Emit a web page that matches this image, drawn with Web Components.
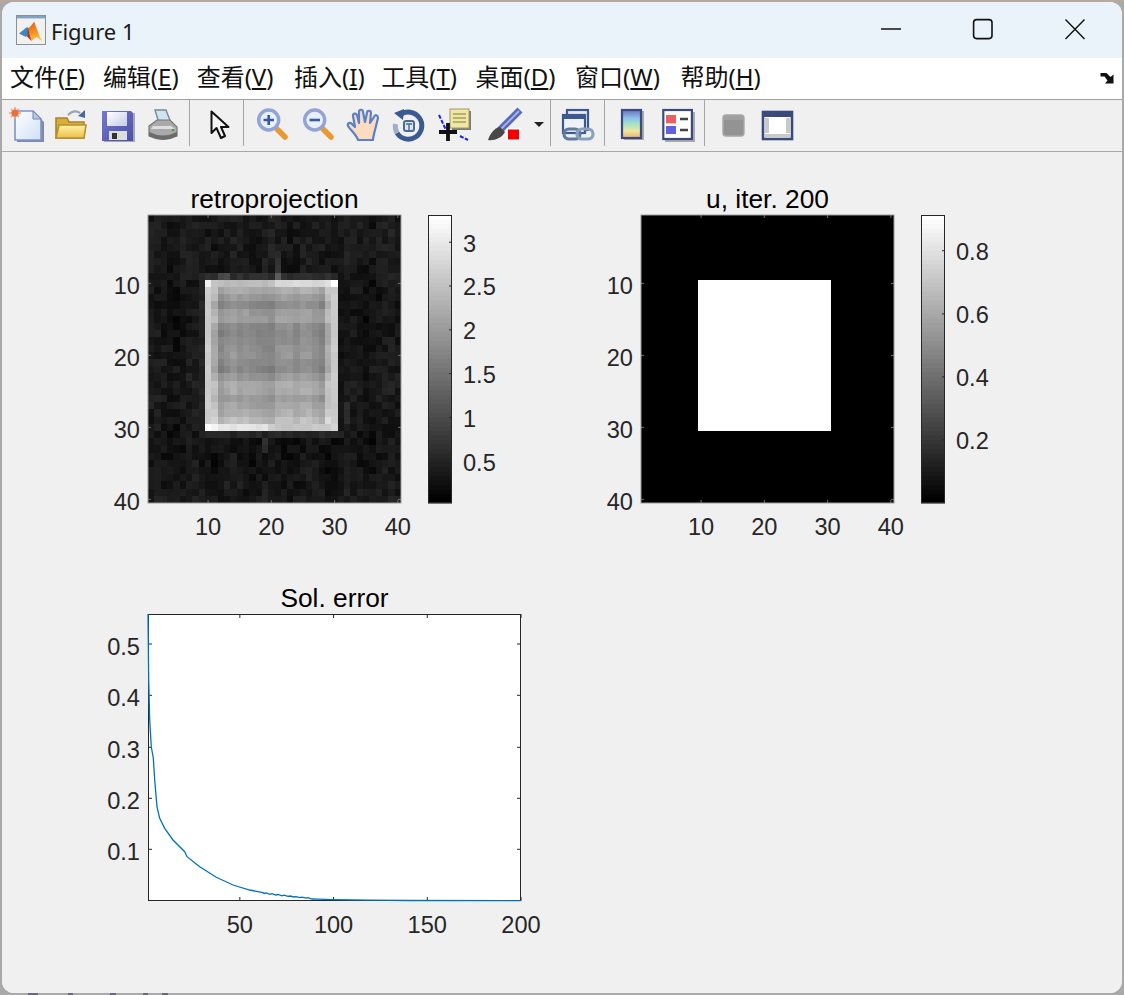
<!DOCTYPE html>
<html>
<head>
<meta charset="utf-8">
<title>Figure 1</title>
<style>
  html, body { margin: 0; height: 100%; }
  body {
    width: 1124px;
    height: 995px;
    overflow: hidden;
    box-sizing: border-box;
    padding: 2px;
    background:
      linear-gradient(#6a6a70, #6a6a70) 28px 993px / 10px 2px no-repeat,
      linear-gradient(#6a6a70, #6a6a70) 68px 993px / 5px 2px no-repeat,
      linear-gradient(#6a6a70, #6a6a70) 110px 993px / 6px 2px no-repeat,
      linear-gradient(#6a6a70, #6a6a70) 143px 993px / 5px 2px no-repeat,
      linear-gradient(#6a6a70, #6a6a70) 162px 993px / 6px 2px no-repeat,
      linear-gradient(#b9a89f 0 2px, #a9a9a9 2px);
  }
</style>
</head>
<body>

<figure-window>
  <title-bar slot="title" label="Figure 1"></title-bar>

  <menu-bar slot="menu">
    <menu-item>文件(<u>F</u>)</menu-item>
    <menu-item>编辑(<u>E</u>)</menu-item>
    <menu-item style="margin-right:2.6px">查看(<u>V</u>)</menu-item>
    <menu-item style="margin-right:-1.4px">插入(<u>I</u>)</menu-item>
    <menu-item style="margin-right:.6px">工具(<u>T</u>)</menu-item>
    <menu-item style="margin-right:1.6px">桌面(<u>D</u>)</menu-item>
    <menu-item style="margin-right:2.6px">窗口(<u>W</u>)</menu-item>
    <menu-item>帮助(<u>H</u>)</menu-item>
  </menu-bar>

  <fig-toolbar slot="tools">
    <tool-button icon="new"></tool-button>
    <tool-button icon="open"></tool-button>
    <tool-button icon="save"></tool-button>
    <tool-button icon="print"></tool-button>
    <tool-sep style="margin:0 7px 0 3px"></tool-sep>
    <tool-button icon="arrow"></tool-button>
    <tool-sep style="margin:0 3px 0 0"></tool-sep>
    <tool-button icon="zoomin"></tool-button>
    <tool-button icon="zoomout" style="margin-left:1px"></tool-button>
    <tool-button icon="hand"></tool-button>
    <tool-button icon="rotate"></tool-button>
    <tool-button icon="cursor" style="margin-left:1px"></tool-button>
    <tool-button icon="brush" style="margin-left:3px"></tool-button>
    <tool-button icon="caret" style="width:10px;margin:0 6px"></tool-button>
    <tool-sep style="margin:0 3px 0 0"></tool-sep>
    <tool-button icon="link"></tool-button>
    <tool-sep style="margin:0 4px 0 4px"></tool-sep>
    <tool-button icon="colorbar"></tool-button>
    <tool-button icon="legend" style="margin-left:-1px"></tool-button>
    <tool-sep style="margin:0 5px 0 4px"></tool-sep>
    <tool-button icon="gray"></tool-button>
    <tool-button icon="plot" style="margin-left:-1px"></tool-button>
  </fig-toolbar>

  <fig-canvas slot="canvas">
    <image-axes left="146" top="63" width="253" height="288" label="retroprojection" data="retro"></image-axes>
    <color-bar left="426" top="63" width="24" height="288" ticks="3:241.7,2.5:285.5,2:329.3,1.5:373.1,1:416.9,0.5:460.7"></color-bar>
    <image-axes left="639" top="63" width="253" height="288" label="u, iter. 200" data="binary"></image-axes>
    <color-bar left="919" top="63" width="24" height="288" ticks="0.8:250.2,0.6:313.4,0.4:376.4,0.2:439.3"></color-bar>
    <line-axes left="146" top="462" width="373" height="287" label="Sol. error"></line-axes>
  </fig-canvas>
</figure-window>

<script>
const FONT_PLOT = '"Liberation Sans", Arial, sans-serif';

/* ---------- window shell ---------- */
class FigureWindow extends HTMLElement {
    constructor() {
        super();
        this.attachShadow({ mode: 'open' });
        this.shadowRoot.innerHTML = `
            <style>
                :host {
                    display: flex;
                    flex-direction: column;
                    height: 991px;
                    width: 1120px;
                    background: #f0f0f0;
                    border-radius: 12px;
                    overflow: hidden;
                }
            </style>
            <slot name="title"></slot>
            <slot name="menu"></slot>
            <slot name="tools"></slot>
            <slot name="canvas"></slot>
        `;
    }
}

class TitleBar extends HTMLElement {
    connectedCallback() {
        this.attachShadow({ mode: 'open' });
        this.shadowRoot.innerHTML = `
            <style>
                :host {
                    display: flex;
                    align-items: center;
                    height: 56px;
                    background: #e9f3f9;
                    color: #1a1a1a;
                    font: 22px "Noto Sans", "Open Sans", sans-serif;
                    padding-left: 14px;
                    padding-right: 1px;
                }
                .logo { width: 30px; height: 30px; flex: none; }
                .text { margin-left: 5px; flex: 1; position: relative; top: 1px; }
                .ctl { width: 92px; height: 56px; flex: none; display: block; }
            </style>
            <svg class="logo" viewBox="0 0 30 30">
                <defs>
                    <linearGradient id="peak" x1="0" y1="0" x2="0.3" y2="1">
                        <stop offset="0" stop-color="#e8561c"/>
                        <stop offset="0.55" stop-color="#f08a20"/>
                        <stop offset="1" stop-color="#f6c040"/>
                    </linearGradient>
                </defs>
                <rect x="0.5" y="0.5" width="29" height="29" fill="#f1f1f1" stroke="#8f8f8f"/>
                <rect x="1" y="1" width="28" height="2.4" fill="#7fa3c4"/>
                <path d="M3,18.5 L11,12 L15,16 L10,22 Z" fill="#3d86c6"/>
                <path d="M18.2,6.5 C20,12 23,20 26,26 L20.5,22 L15.5,26 C14.5,20 13,17 12,13 C14.5,12 16.5,9 18.2,6.5 Z" fill="url(#peak)"/>
                <path d="M12,13 L15.5,26 L11,21.5 Z" fill="#b5381a"/>
            </svg>
            <span class="text">${this.getAttribute('label')}</span>
            <svg class="ctl" viewBox="0 0 92 56"><path d="M36 27H56" stroke="#111" stroke-width="1.6"/></svg>
            <svg class="ctl" viewBox="0 0 92 56"><rect x="36.6" y="17.6" width="18.4" height="19" rx="3" fill="none" stroke="#111" stroke-width="1.6"/></svg>
            <svg class="ctl" viewBox="0 0 92 56"><path d="M36.5 17.5L55.5 37M55.5 17.5L36.5 37" stroke="#111" stroke-width="1.4" fill="none"/></svg>
        `;
    }
}

/* ---------- menu ---------- */
class MenuBar extends HTMLElement {
    connectedCallback() {
        this.attachShadow({ mode: 'open' });
        this.shadowRoot.innerHTML = `
            <style>
                :host {
                    display: flex;
                    align-items: center;
                    gap: 18px;
                    box-sizing: border-box;
                    height: 42px;
                    padding: 0 8px 4px 8px;
                    background: #fff;
                    border-bottom: 1px solid #a0a0a0;
                    position: relative;
                }
                .more { position: absolute; right: 6px; top: 14px; width: 16px; height: 12px; filter: blur(.3px); }
            </style>
            <slot></slot>
            <svg class="more" viewBox="0 0 16 12">
                <path d="M0.5 1H6.5L10.5 5 13.5 2.5V11.5H5L7.5 8.5 4.5 4.5H0.5Z" fill="#111"/>
            </svg>
        `;
    }
}

class MenuItem extends HTMLElement {
    connectedCallback() {
        this.attachShadow({ mode: 'open' });
        this.shadowRoot.innerHTML = `
            <style>
                :host {
                    display: block;
                    font: 24px/30px "Noto Sans", "Noto Sans CJK SC", sans-serif;
                    color: #111;
                    white-space: nowrap;
                }
            </style>
            <slot></slot>
        `;
    }
}

/* ---------- toolbar ---------- */
const ICONS = {
    new: `<path d="M15 14H34L42 22V42H15Z" fill="#7f87ad"/>
          <path d="M13 11H31L39 19V40H13Z" fill="url(#pg)" stroke="#7f94c4" stroke-width="1.6"/>
          <path d="M31 11V19H39Z" fill="#b8c6e2" stroke="#6f86b8" stroke-width="1"/>
          <path d="M13 7V19M7 13H19M9 9L17 17M17 9L9 17" stroke="#f2a27c" stroke-width="1.6"/>
          <circle cx="13" cy="13" r="3.6" fill="#ea6f3e"/>`,
    open: `<path d="M8 18V38H36V22H21L19 18Z" fill="#d9ac3e" stroke="#a9842c" stroke-width="1.6"/>
           <path d="M8 38L11 25H38L36 38Z" fill="url(#fold)" stroke="#b8902c" stroke-width="1.6"/>
           <path d="M20 15Q26 9 32 13" stroke="#97a4b3" stroke-width="2.2" fill="none"/>
           <path d="M30 16L37 10V18Z" fill="#46699c"/>`,
    save: `<path d="M10 39H40V42H10ZM38 13H41V42H38Z" fill="#a2a5bd"/>
           <path d="M8 11H37L39 13V41H8Z" fill="url(#disk)"/>
           <rect x="13" y="12" width="20" height="14" fill="url(#lab)"/>
           <rect x="15" y="31" width="18" height="9" fill="#dcdcdc"/>
           <rect x="18" y="33" width="5" height="6" fill="#333"/>`,
    print: `<path d="M15 10H26L31 23H19Z" fill="#cfe4f2" stroke="#7d8890" stroke-width="1.4"/>
            <path d="M9 26L17 20H30L37 27V36Q23 43 9 36Z" fill="#a9a9a9" stroke="#777" stroke-width="1.2"/>
            <path d="M13 26H31L35 29H11Z" fill="#dedede"/>
            <path d="M9 32Q23 39 37 32V36Q23 43 9 36Z" fill="#6b6b6b"/>
            <circle cx="33" cy="30" r="1.3" fill="#3f9d55"/>`,
    arrow: `<path d="M14.5 11.5V33L19.5 28 24 38 28 36 24 27H31.5Z" fill="#f4f4f4" stroke="#111" stroke-width="2" stroke-linejoin="round"/>`,
    zoomin: `<path d="M30 29L38 37" stroke="#e89a30" stroke-width="5.5" stroke-linecap="round"/>
             <circle cx="21.7" cy="20" r="10" fill="#e8f0fb" stroke="#93a3d4" stroke-width="3.4"/>
             <path d="M16.5 20H27M21.7 15V25" stroke="#3a56a4" stroke-width="2.6"/>`,
    zoomout: `<path d="M29 29L37 37" stroke="#e89a30" stroke-width="5.5" stroke-linecap="round"/>
              <circle cx="20.7" cy="20" r="10" fill="#e8f0fb" stroke="#93a3d4" stroke-width="3.4"/>
              <path d="M15.5 20H26" stroke="#3a56a4" stroke-width="2.6"/>`,
    hand: `<path d="M18 40C16 34 11 31 8 26C7 23 10 22 12 24L15 27L13 16C13 13 16 13 17 15L19 23L19 12C19 9 23 9 23 12L25 22L27 13C27 10 31 10 31 13L30 23L34 17C35 14 38 15 38 18L35 30C34 34 33 37 33 40Z"
                 fill="#fbdcc0" stroke="#5a80c8" stroke-width="2.2" stroke-linejoin="round"/>`,
    rotate: `<path d="M14 15A13.5 13.5 0 1 1 11 33" fill="none" stroke="#3a5a90" stroke-width="5"/>
             <path d="M11 33A13.5 13.5 0 0 1 9.5 24" fill="none" stroke="#9fb0c6" stroke-width="5"/>
             <path d="M8 13L18 9L17 20Z" fill="#3a5a90"/>
             <rect x="18" y="21" width="10" height="10" rx="2" fill="#dfe6f0" stroke="#4a6a9a" stroke-width="2"/>
             <path d="M20 24H26M23 24V31" stroke="#4a6a9a" stroke-width="1.4"/>`,
    cursor: `<path d="M6 15L13 30M27 36L35 40" stroke="#2020e0" stroke-width="2" stroke-dasharray="4 1.5" fill="none"/>
             <rect x="19" y="11" width="19" height="19" fill="#7b7b75"/>
             <rect x="17" y="9" width="19" height="19" fill="#efe7a3" stroke="#9c9a70" stroke-width="1"/>
             <path d="M20 14H33M20 18H33M20 22H33" stroke="#b7b06e" stroke-width="1.8"/>
             <path d="M6 32H24M15 23V41" stroke="#111" stroke-width="3.8"/>`,
    brush: `<path d="M38 10L18 30" stroke="#5a68bc" stroke-width="7"/>
            <path d="M37 11L19 29" stroke="#aab4e6" stroke-width="1.8"/>
            <path d="M18 27C12 28 8 34 6 40C12 41 20 38 23 32Z" fill="#484848"/>
            <rect x="24.5" y="28" width="14" height="13" fill="#fff"/>
            <rect x="26" y="29.5" width="11" height="10" fill="#f50000"/>`,
    caret: `<path d="M0 22H10L5 27Z" fill="#222"/>`,
    link: `<rect x="13" y="10" width="21" height="20" fill="#e6ebf3" stroke="#3d5a90" stroke-width="2.2"/>
           <rect x="9" y="15" width="22" height="18" fill="#eef1f6" stroke="#3d5a90" stroke-width="2.2"/>
           <rect x="9" y="15" width="22" height="4" fill="#3d5a90"/>
           <rect x="10" y="29" width="16" height="10" rx="5" fill="none" stroke="#5f7ba2" stroke-width="3.2"/>
           <rect x="23" y="29" width="16" height="10" rx="5" fill="none" stroke="#8aa0bc" stroke-width="3.2"/>`,
    colorbar: `<rect x="15" y="11" width="20" height="29" fill="#aaa"/>
               <rect x="13" y="10" width="19" height="28" fill="url(#cb)" stroke="#3a4a80" stroke-width="2.2"/>`,
    legend: `<rect x="11" y="12" width="30" height="30" fill="#aaa"/>
             <rect x="9.3" y="10" width="28.6" height="29" fill="#fff" stroke="#3a4a80" stroke-width="2.2"/>
             <rect x="12" y="15" width="10" height="8.4" fill="#e86060"/>
             <rect x="12" y="26" width="10" height="8" fill="#6060e0"/>
             <path d="M26 19H34M26 30H34" stroke="#444" stroke-width="2.4"/>`,
    gray: `<rect x="13" y="15" width="21" height="21" rx="3" fill="#939393" stroke="#a8a8a8" stroke-width="1.4"/>
           <rect x="14" y="16" width="19" height="4" fill="#a0a0a0"/>`,
    plot: `<rect x="8" y="12" width="29" height="27" fill="#fff" stroke="#3a4a7a" stroke-width="2.6"/>
           <rect x="8" y="12" width="29" height="5" fill="#3a4a7a"/>
           <rect x="10" y="18" width="4" height="15" fill="#c9c9c9"/>
           <rect x="31" y="18" width="4" height="15" fill="#c9c9c9"/>
           <rect x="10" y="34" width="25" height="4" fill="#c9c9c9"/>`
};

class FigToolbar extends HTMLElement {
    connectedCallback() {
        this.attachShadow({ mode: 'open' });
        this.shadowRoot.innerHTML = `
            <style>
                :host {
                    display: flex;
                    box-sizing: border-box;
                    height: 52px;
                    background: #f0f0f0;
                    border-bottom: 1px solid #a9a9a9;
                }
            </style>
            <slot></slot>
        `;
    }
}

class ToolSep extends HTMLElement {
    connectedCallback() {
        this.attachShadow({ mode: 'open' });
        this.shadowRoot.innerHTML = `
            <style>
                :host {
                    display: block;
                    flex: none;
                    width: 1px;
                    height: 46px;
                    margin-top: 3px;
                    background: #a5a5a5;
                }
            </style>
        `;
    }
}

class ToolButton extends HTMLElement {
    connectedCallback() {
        this.attachShadow({ mode: 'open' });
        const name = this.getAttribute('icon');
        const vbW = name === 'caret' ? 10 : 46;
        this.shadowRoot.innerHTML = `
            <style>
                :host { display: block; flex: none; width: 46px; height: 51px; }
                svg { display: block; width: 100%; height: 51px; filter: blur(.6px); overflow: visible; }
            </style>
            <svg viewBox="0 0 ${vbW} 51">
                <defs>
                    <linearGradient id="pg" x1="0" y1="0" x2="1" y2="1">
                        <stop offset="0" stop-color="#fff"/><stop offset="1" stop-color="#cfe0f6"/>
                    </linearGradient>
                    <linearGradient id="fold" x1="0" y1="0" x2="0" y2="1">
                        <stop offset="0" stop-color="#fff3a6"/><stop offset="1" stop-color="#ecc04a"/>
                    </linearGradient>
                    <linearGradient id="disk" x1="0" y1="0" x2="1" y2="1">
                        <stop offset="0" stop-color="#7378d0"/><stop offset="1" stop-color="#4a50a4"/>
                    </linearGradient>
                    <linearGradient id="lab" x1="0" y1="0" x2="1" y2="1">
                        <stop offset="0" stop-color="#fff"/><stop offset="1" stop-color="#c6cbe8"/>
                    </linearGradient>
                    <linearGradient id="cb" x1="0" y1="0" x2="0" y2="1">
                        <stop offset="0" stop-color="#6a70c0"/><stop offset=".3" stop-color="#8ec4ea"/>
                        <stop offset=".5" stop-color="#a6e2c4"/><stop offset=".75" stop-color="#f0e6a0"/>
                        <stop offset="1" stop-color="#f0b070"/>
                    </linearGradient>
                </defs>
                ${ICONS[name]}
            </svg>
        `;
    }
}

/* ---------- figure canvas: axes sit at their own place on it ---------- */
class FigCanvas extends HTMLElement {
    connectedCallback() {
        this.attachShadow({ mode: 'open' });
        this.shadowRoot.innerHTML = `
            <style>
                :host { display: block; flex: 1; position: relative; background: #f0f0f0; }
            </style>
            <slot></slot>
        `;
    }
}

class PlotBase extends HTMLElement {
    box() {
        return ['left', 'top', 'width', 'height'].map(k => Number(this.getAttribute(k)));
    }

    // anchor: c = centred, r = right edge on x, l = left edge on x
    text(str, x, y, anchor) {
        const tx = { c: '-50%', r: '-100%', l: '0' }[anchor];
        return `<span class="t" style="left:${x}px;top:${y}px;transform:translate(${tx},-50%)">${str}</span>`;
    }

    mount(inner) {
        const [l, t, w, h] = this.box();
        this.attachShadow({ mode: 'open' });
        this.shadowRoot.innerHTML = `
            <style>
                :host {
                    display: block;
                    position: absolute;
                    left: ${l}px;
                    top: ${t}px;
                    width: ${w}px;
                    height: ${h}px;
                }
                svg { position: absolute; left: 0; top: 0; width: ${w}px; height: ${h}px; overflow: visible; display: block; }
                .t {
                    position: absolute;
                    font: 23.6px/1 ${FONT_PLOT};
                    color: #262626;
                    white-space: nowrap;
                }
                .t.title { font-size: 26.3px; color: #000; }
            </style>
            ${inner}
        `;
    }

    title(w) {
        return this.text(this.getAttribute('label'), w / 2, -16, 'c').replace('class="t"', 'class="t title"');
    }
}

/* ---------- retro image: row and column profile plus seeded noise ---------- */
function retroValue(r, c, rand) {
    const rows = { 11: 0xa8, 12: 0x98, 13: 0x88, 14: 0x98, 15: 0x9c, 16: 0x88, 17: 0x84, 18: 0x88, 19: 0x8c, 20: 0x90,
                   21: 0x88, 22: 0x84, 23: 0x94, 24: 0xa4, 25: 0xa4, 26: 0x98, 27: 0xa0, 28: 0xa8, 29: 0xb8 };
    const cols = { 11: 0xb4, 12: 0x90, 13: 0x9a, 14: 0xa0, 15: 0x98, 16: 0x9c, 17: 0x96, 18: 0x94, 19: 0x92, 20: 0x90,
                   21: 0x9c, 22: 0x9e, 23: 0xa0, 24: 0x98, 25: 0xa0, 26: 0xa0, 27: 0x98, 28: 0x90, 29: 0xb8 };
    const inside = r >= 10 && r <= 30 && c >= 10 && c <= 30;
    if (inside) {
        if (r === 10 && c === 10) return 0xf0;
        if (r === 10 && c === 30) return 0xff;
        if (r === 10 && c === 29) return 0xe0;
        if (r === 30 && c === 10) return 0xff;
        if (r === 30 && c === 11) return 0xf4;
        if (r === 30 && c === 30) return 0xd4;
        if (r === 10) return (c > 20 ? 0xd4 : 0xb8) + rand() * 12;
        if (r === 30) return (c < 20 ? 0xdc : 0xc0) + rand() * 12;
        if (c === 10) return 0xc6 + rand() * 10;
        if (c === 30) return 0xc6 + rand() * 8;
        return rows[r] + cols[c] - 0x96 + (rand() - 0.5) * 10;
    }
    if (r === 9 && c >= 10 && c <= 30) return (c === 21 ? 0x50 : c === 12 || c === 13 ? 0x44 : 0x26) + rand() * 14;
    if (c === 9 && r >= 9 && r <= 30) return 0x1c + rand() * 16;
    if (r === 31 && c >= 9 && c <= 31) return 0x1e + rand() * 14;
    if (c === 31 && r >= 10 && r <= 30) return 0x0c + rand() * 14;
    if (c === 32 && r >= 27 && r <= 29) return 0x2a + rand() * 10;
    if (c === 21 && r >= 6 && r <= 8) return 0x28 + rand() * 14;
    if (c === 19 && r >= 32 && r <= 33) return 0x28 + rand() * 10;
    // faint row/column streaks so the background is not plain salt noise
    const streak = 4 * Math.sin(r * 12.9) + 4 * Math.sin(c * 7.3);
    return 0x0b + streak + rand() * 0x16;
}

class ImageAxes extends PlotBase {
    connectedCallback() {
        const [, , w, h] = this.box();
        const retro = this.getAttribute('data') === 'retro';
        let seed = 4711;
        const rand = () => (seed = (seed * 16807) % 2147483647) / 2147483647;
        let cells = '';
        if (retro) {
            for (let r = 1; r <= 40; r++) {
                for (let c = 1; c <= 40; c++) {
                    const v = Math.max(0, Math.min(255, Math.round(retroValue(r, c, rand))));
                    cells += `<rect x="${c - 1}" y="${r - 1}" width="1.02" height="1.02" fill="rgb(${v},${v},${v})"/>`;
                }
            }
        } else {
            cells = '<rect width="40" height="40" fill="#000"/><rect x="9" y="9" width="21" height="21" fill="#fff"/>';
        }
        const px = t => (t - 0.5) / 40 * w;
        const py = t => (t - 0.5) / 40 * h;
        let ticks = '';
        [10, 20, 30, 40].forEach(t => {
            const x = px(t), y = py(t);
            ticks += `<path d="M${x} 0v3M${x} ${h}v-3M0 ${y}h3M${w} ${y}h-3" stroke="#6e6e6e" stroke-width="1" fill="none"/>`;
        });
        const labels = [10, 20, 30, 40].map(t =>
            this.text(t, px(t), h + 25, 'c') + this.text(t, -8, py(t) + 3.3, 'r')).join('');
        this.mount(`
            <svg viewBox="0 0 40 40" preserveAspectRatio="none" shape-rendering="crispEdges">${cells}</svg>
            <svg viewBox="0 0 ${w} ${h}">
                ${ticks}
                <rect x="0" y="0" width="${w}" height="${h}" fill="none" stroke="#9a9a9a" stroke-width="1"/>
            </svg>
            ${this.title(w)}
            ${labels}
        `);
    }
}

class ColorBar extends PlotBase {
    connectedCallback() {
        const [, t0, w, h] = this.box();
        let steps = '';
        for (let i = 0; i < 64; i++) {
            const v = Math.round(255 * (63 - i) / 63);
            steps += `<rect x="0" y="${i * h / 64}" width="${w}" height="${h / 64 + 0.5}" fill="rgb(${v},${v},${v})"/>`;
        }
        // tick attribute holds page y; the canvas starts at y 152
        const ticks = this.getAttribute('ticks').split(',').map(s => s.split(':'));
        const marks = ticks.map(([, y]) => `<path d="M${w} ${y - 152 - t0 + 0.5}h-3" stroke="#262626"/>`).join('');
        const labels = ticks.map(([v, y]) => this.text(v, w + 11, Number(y) - 152 - t0 + 2.8, 'l')).join('');
        this.mount(`
            <svg viewBox="0 0 ${w} ${h}">
                ${steps}
                ${marks}
                <rect x="0.5" y="0.5" width="${w - 1}" height="${h - 1}" fill="none" stroke="#262626"/>
            </svg>
            ${labels}
        `);
    }
}

/* curve read off the picture, in px from the axes' top left */
const ERROR_CURVE = [
    [0, 0], [0.7, 66], [1.7, 106], [3.3, 133], [5.3, 144], [6.7, 166], [9, 193], [11.7, 204.3], [16.7, 214.3],
    [25, 226], [36.7, 237.7], [39, 242.7], [51.7, 252.7], [68.3, 263.3], [85, 271], [101.7, 276], [115, 278.7],
    [116, 279.5], [118, 279], [122, 280.3], [124, 279.7], [128, 281], [130, 280.5], [134, 281.8], [136, 281.2],
    [140, 282.4], [142, 282], [146, 283], [148, 282.6], [152, 283.6], [154, 283.2], [158, 284.2], [160, 283.6],
    [164, 285], [170, 285.2], [185, 285.6], [220, 286.2], [260, 286.5], [373, 286.7]
];

class LineAxes extends PlotBase {
    connectedCallback() {
        const [, , w, h] = this.box();
        const xs = [50, 100, 150, 200].map(v => [v, (v - 1) / 199 * w]);
        const ys = [[0.5, 30], [0.4, 81.3], [0.3, 133.3], [0.2, 184.3], [0.1, 235.3]];
        let ticks = '';
        xs.forEach(([, x]) => { ticks += `M${x} 0v4M${x} ${h}v-4`; });
        ys.forEach(([, y]) => { ticks += `M0 ${y}h4M${w} ${y}h-4`; });
        const labels = xs.map(([v, x]) => this.text(v, x, h + 25, 'c')).join('')
            + ys.map(([v, y]) => this.text(v, -8, y + 3.5, 'r')).join('');
        const pts = ERROR_CURVE.map(p => p.join(',')).join(' ');
        this.mount(`
            <svg viewBox="0 0 ${w} ${h}">
                <rect x="0.5" y="0.5" width="${w - 1}" height="${h - 1}" fill="#fff" stroke="#262626"/>
                <path d="${ticks}" stroke="#262626" fill="none"/>
                <polyline points="${pts}" fill="none" stroke="#0072bd" stroke-width="1.3"/>
            </svg>
            ${this.title(w)}
            ${labels}
        `);
    }
}

customElements.define('figure-window', FigureWindow);
customElements.define('title-bar', TitleBar);
customElements.define('menu-bar', MenuBar);
customElements.define('menu-item', MenuItem);
customElements.define('fig-toolbar', FigToolbar);
customElements.define('tool-sep', ToolSep);
customElements.define('tool-button', ToolButton);
customElements.define('fig-canvas', FigCanvas);
customElements.define('image-axes', ImageAxes);
customElements.define('color-bar', ColorBar);
customElements.define('line-axes', LineAxes);
</script>
</body>
</html>
